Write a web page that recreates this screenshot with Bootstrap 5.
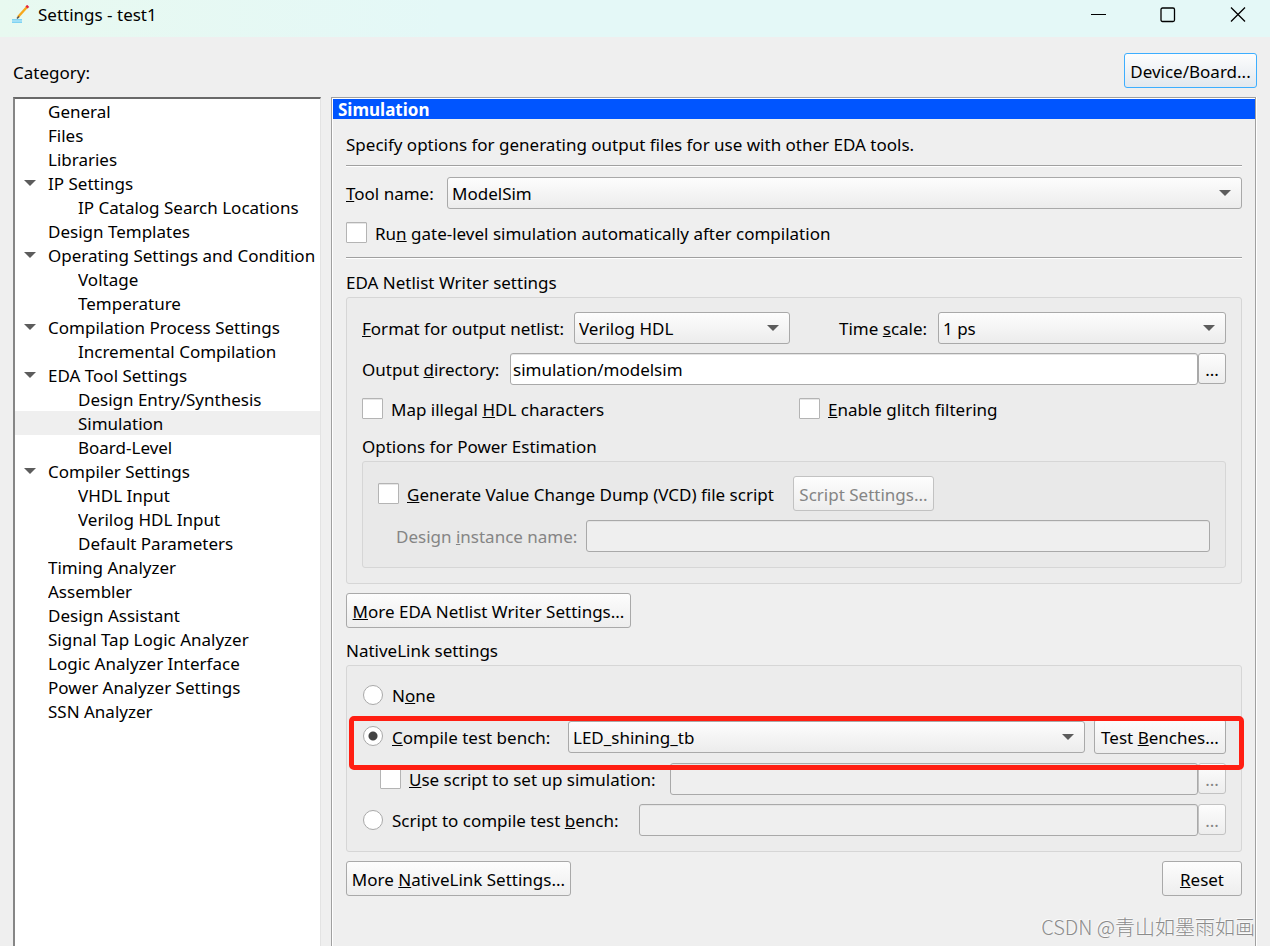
<!DOCTYPE html>
<html lang="en">
<head>
<meta charset="utf-8">
<meta name="viewport" content="width=device-width, initial-scale=1">
<title>Settings - test1</title>
<link href="https://cdn.jsdelivr.net/npm/bootstrap@5.3.0/dist/css/bootstrap.min.css" rel="stylesheet">
<style>
  body { font: 17px/24px "Noto Sans", "Noto Sans CJK SC", sans-serif; color: #000; background: #efefef; }
  .title-strip { height: 37px; padding: 0 12px 8px; background: linear-gradient(90deg, #e8f9f0, #e4f8f7 35%); }
  .win-btn { width: 16px; height: 16px; padding: 0; border: 0; background: none; line-height: 0; }
  .win-controls { gap: 54px; padding-right: 12px; }
  .page-body { padding: 16px 13px 0; gap: 9px; }
  .page-split { gap: 10px; }

  .tree { width: 308px; background: #fff; border: 2px solid #696969; border-width: 2px 1px 0 2px; border-left-color: #868686; border-right-color: #e3e3e3; }
  .tree ul { margin: 0; padding: 0; list-style: none; }
  .tree a { display: block; flex: 1; padding-top: 2px; line-height: 22px; color: #000; text-decoration: none; white-space: nowrap; overflow: hidden; }
  .tree-row { display: flex; padding-left: 33px; }
  .tree ul ul .tree-row { padding-left: 63px; }
  .tree-row.has-kids { padding-left: 9px; }
  .tree-row.active { background: #efefef; }
  .twisty { flex: none; width: 24px; padding: 0; border: 0; background: none; display: flex; align-items: center; }

  .panel { border: 1px solid #a0a0a0; border-bottom: 0; box-shadow: inset 1px 1px #fff, 1px 0 #fff; padding: 1px 0 0 1px; margin-right: 1px; min-width: 0; }
  .panel-title { height: 20px; padding: 1px 5px 0; margin: 0; font-size: 17px; line-height: 20px; font-weight: 700; color: #fff; background: #05f; }
  .panel-main { padding: 14px 13px 20px; }
  .rule { height: 2px; background: #fff; border-top: 1px solid #a0a0a0; }
  .rule-spaced { margin: 12px 0; }
  .tool-row { margin: 10px 0 12px; }
  .group { border: 1px solid #d6d6d6; border-radius: 3px; background: #ececec; padding: 14px 15px 15px; margin-top: 2px; display: flex; flex-direction: column; gap: 9px; }
  .group .group { background: #e9e9e9; }
  .checks { display: grid; grid-template-columns: 1fr 1fr; column-gap: 10px; margin: 3px 0 5px; }
  .inset-row { padding-left: 18px; }
  .more-btn { display: block; margin: 9px 0 11px; }
  .none-row { height: 30px; }
  .foot-row { margin-top: 9px; }

  .btn-qt { height: 35px; padding: 2px 0 0; border: 1px solid #a9a9a9; border-radius: 3px; background: linear-gradient(#fdfdfd, #ededed); color: #000; line-height: 24px; white-space: nowrap; flex: none; }
  .btn-qt:disabled { color: #858585; border-color: #c2c2c2; }
  .btn-focus { border-color: #3daeff; background: linear-gradient(#fdfdfd, #e2e8ee); }
  .btn-dots { width: 28px; height: 31px; }
  .w-80 { width: 80px; } .w-132 { width: 132px; } .w-133 { width: 133px; } .w-141 { width: 141px; } .w-225 { width: 225px; } .w-285 { width: 285px; }

  label { flex: none; padding-top: 2px; line-height: 22px; white-space: nowrap; }
  .lb-101 { width: 101px; } .lb-99 { width: 99px; } .lb-148 { width: 148px; } .lb-212 { width: 212px; } .lb-190 { width: 190px; }
  .lb-176 { width: 176px; } .lb-261 { width: 261px; } .lb-247 { width: 247px; } .lb-386 { width: 386px; }
  .dim { color: #858585; }

  .form-control, .form-select { height: 32px; font-size: 17px; line-height: 24px; color: #000; border: 1px solid #a9a9a9; border-radius: 3px; min-width: 0; }
  .form-control { padding: 3px 2px; background: #fff; box-shadow: inset 0 1px #e4e4e4; }
  .form-control:disabled { background: #efefef; }
  .form-select { padding: 4px 30px 2px 4px; background-color: transparent;
    background-image: url("data:image/svg+xml,%3Csvg xmlns='http://www.w3.org/2000/svg' width='12' height='6'%3E%3Cpath d='M0 0h12L6 6z' fill='%235c5c5c'/%3E%3C/svg%3E"), linear-gradient(#fdfdfd, #ececec);
    background-position: right 10px center, 0 0; background-size: 12px 6px, 100% 100%; }
  .fmt-select { width: 216px; flex: none; margin-right: 49px; }
  .bench-select { margin-right: 9px; }
  .form-check-input { flex: none; margin: 0; border: 1px solid #b4b4b4; background-color: #fff; }
  .form-check-input[type=checkbox] { width: 21px; height: 21px; border-radius: 1px; box-shadow: inset 0 1px #e6e6e6; margin: 0 8px 1px 0; }
  .form-check-input[type=radio] { width: 20px; height: 20px; margin: 0 9px 1px 1px; border-color: #a9a9a9; }
  .form-check-input[type=radio]:checked { background-color: #fff; border-color: #a9a9a9; background-image: radial-gradient(circle, #444 4px, transparent 5px); }

  .callout { position: absolute; left: 2px; right: -3px; top: 50px; height: 54px; border: 5px solid #ff1e12; border-radius: 5px; pointer-events: none; }
  .stamp { position: absolute; right: 15px; bottom: 4px; font: 300 20px/30px "Noto Sans CJK SC", sans-serif; color: #8c8c8c; text-shadow: -1px -1px #fafafa; white-space: nowrap; }
</style>
</head>
<body>
<div class="min-vh-100 d-flex flex-column position-relative overflow-hidden">
  <header class="title-strip d-flex align-items-center">
    <svg width="18" height="19" viewBox="0 0 18 19" aria-hidden="true">
      <path d="M0 14h10v4H0z" fill="#7fd3f2"/><path d="M0 16h10" stroke="#c5ecfa"/>
      <path d="M6 12L15 2" stroke="#f6a81c" stroke-width="2.4"/><path d="M5 13.5l2-2" stroke="#555" stroke-width="1.6"/><path d="M14.5 2.5L16.200 .9" stroke="#e5253c" stroke-width="3"/>
    </svg>
    <span class="ps-2">Settings - test1</span>
    <div class="win-controls d-flex ms-auto">
      <button class="win-btn" aria-label="Minimize"><svg width="16" height="16"><path d="M1 7.500h15" stroke="#000"/></svg></button>
      <button class="win-btn" aria-label="Maximize"><svg width="16" height="16"><rect x="1" y="1" width="13.500" height="13.500" rx="1.500" fill="none" stroke="#000" stroke-width="1.300"/></svg></button>
      <button class="win-btn" aria-label="Close"><svg width="16" height="16"><path d="M1 .5l14 14M15 .5L1 14.500" stroke="#000" stroke-width="1.300"/></svg></button>
    </div>
  </header>

  <div class="page-body d-flex flex-column flex-grow-1">
    <div class="d-flex justify-content-between align-items-center">
      <span class="pt-1">Category:</span>
      <button class="btn-qt btn-focus w-133">Device/Board...</button>
    </div>

    <div class="page-split d-flex flex-grow-1">
      <nav class="tree flex-shrink-0" aria-label="Category">
        <ul>
          <li><div class="tree-row"><a href="#">General</a></div></li>
          <li><div class="tree-row"><a href="#">Files</a></div></li>
          <li><div class="tree-row"><a href="#">Libraries</a></div></li>
          <li><div class="tree-row has-kids"><button class="twisty" aria-label="Collapse"><svg width="12" height="6"><path d="M0 0h12L6 6z" fill="#5c5c5c"/></svg></button><a href="#">IP Settings</a></div>
            <ul><li><div class="tree-row"><a href="#">IP Catalog Search Locations</a></div></li></ul></li>
          <li><div class="tree-row"><a href="#">Design Templates</a></div></li>
          <li><div class="tree-row has-kids"><button class="twisty" aria-label="Collapse"><svg width="12" height="6"><path d="M0 0h12L6 6z" fill="#5c5c5c"/></svg></button><a href="#">Operating Settings and Condition</a></div>
            <ul><li><div class="tree-row"><a href="#">Voltage</a></div></li>
            <li><div class="tree-row"><a href="#">Temperature</a></div></li></ul></li>
          <li><div class="tree-row has-kids"><button class="twisty" aria-label="Collapse"><svg width="12" height="6"><path d="M0 0h12L6 6z" fill="#5c5c5c"/></svg></button><a href="#">Compilation Process Settings</a></div>
            <ul><li><div class="tree-row"><a href="#">Incremental Compilation</a></div></li></ul></li>
          <li><div class="tree-row has-kids"><button class="twisty" aria-label="Collapse"><svg width="12" height="6"><path d="M0 0h12L6 6z" fill="#5c5c5c"/></svg></button><a href="#">EDA Tool Settings</a></div>
            <ul><li><div class="tree-row"><a href="#">Design Entry/Synthesis</a></div></li>
            <li><div class="tree-row active"><a href="#" aria-current="page">Simulation</a></div></li>
            <li><div class="tree-row"><a href="#">Board-Level</a></div></li></ul></li>
          <li><div class="tree-row has-kids"><button class="twisty" aria-label="Collapse"><svg width="12" height="6"><path d="M0 0h12L6 6z" fill="#5c5c5c"/></svg></button><a href="#">Compiler Settings</a></div>
            <ul><li><div class="tree-row"><a href="#">VHDL Input</a></div></li>
            <li><div class="tree-row"><a href="#">Verilog HDL Input</a></div></li>
            <li><div class="tree-row"><a href="#">Default Parameters</a></div></li></ul></li>
          <li><div class="tree-row"><a href="#">Timing Analyzer</a></div></li>
          <li><div class="tree-row"><a href="#">Assembler</a></div></li>
          <li><div class="tree-row"><a href="#">Design Assistant</a></div></li>
          <li><div class="tree-row"><a href="#">Signal Tap Logic Analyzer</a></div></li>
          <li><div class="tree-row"><a href="#">Logic Analyzer Interface</a></div></li>
          <li><div class="tree-row"><a href="#">Power Analyzer Settings</a></div></li>
          <li><div class="tree-row"><a href="#">SSN Analyzer</a></div></li>
        </ul>
      </nav>

      <main class="panel flex-grow-1">
        <h1 class="panel-title">Simulation</h1>
        <div class="panel-main">
          <p class="mb-2">Specify options for generating output files for use with other EDA tools.</p>
          <div class="rule"></div>
          <div class="tool-row d-flex align-items-center">
            <label class="lb-101" for="tool"><u>T</u>ool name:</label>
            <select class="form-select" id="tool"><option>ModelSim</option></select>
          </div>
          <div class="d-flex align-items-center">
            <input class="form-check-input" type="checkbox" id="gate"><label for="gate">Ru<u>n</u> gate-level simulation automatically after compilation</label>
          </div>
          <div class="rule rule-spaced"></div>

          <div>EDA Netlist Writer settings</div>
          <section class="group">
            <div class="d-flex align-items-center">
              <label class="lb-212" for="fmt"><u>F</u>ormat for output netlist:</label>
              <select class="form-select fmt-select" id="fmt"><option>Verilog HDL</option></select>
              <label class="lb-99" for="scale">Time <u>s</u>cale:</label>
              <select class="form-select" id="scale"><option>1 ps</option></select>
            </div>
            <div class="d-flex align-items-start">
              <label class="lb-148 align-self-center" for="dir">Output <u>d</u>irectory:</label>
              <input class="form-control" id="dir" value="simulation/modelsim">
              <button class="btn-qt btn-dots" aria-label="Browse">...</button>
            </div>
            <div class="checks">
              <div class="d-flex align-items-center"><input class="form-check-input" type="checkbox" id="ill"><label for="ill">Map illegal <u>H</u>DL characters</label></div>
              <div class="d-flex align-items-center"><input class="form-check-input" type="checkbox" id="gli"><label for="gli"><u>E</u>nable glitch filtering</label></div>
            </div>
            <div>
              <div>Options for Power Estimation</div>
              <div class="group">
                <div class="d-flex align-items-center">
                  <input class="form-check-input" type="checkbox" id="vcd"><label class="lb-386" for="vcd"><u>G</u>enerate Value Change Dump (VCD) file script</label>
                  <button class="btn-qt w-141" disabled>Script Settings...</button>
                </div>
                <div class="d-flex align-items-center inset-row">
                  <label class="lb-190 dim" for="inst">Design <u>i</u>nstance name:</label>
                  <input class="form-control" id="inst" disabled>
                </div>
              </div>
            </div>
          </section>
          <button class="btn-qt w-285 more-btn"><u>M</u>ore EDA Netlist Writer Settings...</button>

          <div>NativeLink settings</div>
          <section class="group position-relative">
            <div class="d-flex align-items-center none-row">
              <input class="form-check-input" type="radio" name="nl" id="none"><label for="none">N<u>o</u>ne</label>
            </div>
            <div class="d-flex align-items-center">
              <input class="form-check-input" type="radio" name="nl" id="ctb" checked><label class="lb-176" for="ctb"><u>C</u>ompile test bench:</label>
              <select class="form-select bench-select" aria-label="Test bench"><option>LED_shining_tb</option></select>
              <button class="btn-qt w-132">Test <u>B</u>enches...</button>
            </div>
            <div class="d-flex align-items-start inset-row">
              <div class="d-flex align-items-center align-self-center"><input class="form-check-input" type="checkbox" id="us"><label class="lb-261" for="us"><u>U</u>se script to set up simulation:</label></div>
              <input class="form-control" aria-label="Setup script" disabled>
              <button class="btn-qt btn-dots" aria-label="Browse setup script" disabled>...</button>
            </div>
            <div class="d-flex align-items-start">
              <div class="d-flex align-items-center align-self-center"><input class="form-check-input" type="radio" name="nl" id="sc"><label class="lb-247" for="sc">Script to compile test <u>b</u>ench:</label></div>
              <input class="form-control" aria-label="Compile script" disabled>
              <button class="btn-qt btn-dots" aria-label="Browse compile script" disabled>...</button>
            </div>
            <div class="callout"></div>
          </section>
          <div class="d-flex justify-content-between foot-row">
            <button class="btn-qt w-225">More <u>N</u>ativeLink Settings...</button>
            <button class="btn-qt w-80"><u>R</u>eset</button>
          </div>
        </div>
      </main>
    </div>
  </div>
  <div class="stamp">CSDN @青山如墨雨如画</div>
</div>
<script src="https://cdn.jsdelivr.net/npm/bootstrap@5.3.0/dist/js/bootstrap.bundle.min.js"></script>
</body>
</html>
